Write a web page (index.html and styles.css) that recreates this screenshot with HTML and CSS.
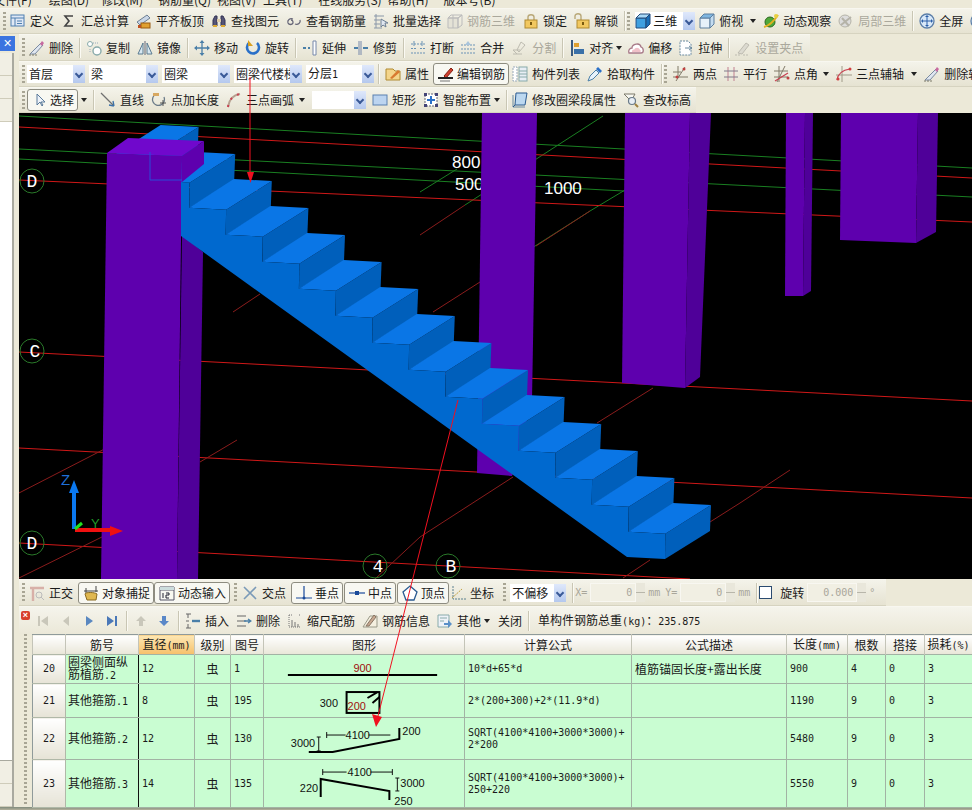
FILE: index.html
```html
<!DOCTYPE html>
<html lang="zh-CN">
<head>
<meta charset="utf-8">
<title>钢筋三维</title>
<link rel="stylesheet" href="styles.css">
</head>
<body>
<svg class="defs" aria-hidden="true">
<symbol id="define" viewBox="0 0 16 16"><rect x="1" y="2" width="13" height="11" fill="#dfe8f5" stroke="#4f7fb0"/><path d="M1 5h13M5 5v8M7 8h5M7 10.500h5" stroke="#4f7fb0" fill="none"/></symbol>
<symbol id="sigma" viewBox="0 0 16 16"><path d="M12 3H4l4 5-4 5h8" fill="none" stroke="#444" stroke-width="1.600"/></symbol>
<symbol id="level" viewBox="0 0 16 16"><path d="M1 9 11 2l3 3L4 12z" fill="#c9d6e6" stroke="#6d7f93"/><rect x="5" y="10" width="9" height="5" fill="#e0a030" stroke="#9a5a10"/><path d="M2 12h3v3H2z" fill="#c05020"/></symbol>
<symbol id="binoc" viewBox="0 0 16 16"><path d="M2 13V7l2-4h2v10zM14 13V7l-2-4h-2v10z" fill="#557" stroke="#335"/><rect x="6" y="6" width="4" height="3" fill="#dca"/><path d="M2 13h4M10 13h4" stroke="#da3" stroke-width="2"/></symbol>
<symbol id="glasses" viewBox="0 0 16 16"><path d="M7 6C4 5 1 7 2 10c1 2 4 2 5 0 0-1 0-3-2-3M9 11c3 1 6-1 5-4" fill="none" stroke="#667" stroke-width="1.300"/></symbol>
<symbol id="batch" viewBox="0 0 16 16"><path d="M1 3h10M1 7h6M1 11h6M1 15h8M3 1v14" stroke="#8a97a8" fill="none"/><path d="M8 6v8l2-2 3 2-1-4h3z" fill="#dfe6f0" stroke="#6d7f93"/></symbol>
<symbol id="cube3" viewBox="0 0 16 16"><path d="M1 5 1 15l10 0 0-10z" fill="#e4e2d6" stroke="#bbb"/><path d="M1 5l3-3h11l-4 3zM11 5l4-3v10l-4 3zM6 2v13" fill="none" stroke="#bbb"/></symbol>
<symbol id="lock" viewBox="0 0 16 16"><path d="M5 7V4c0-3 6-3 6 0v3" fill="none" stroke="#b9a878" stroke-width="1.400"/><rect x="2" y="7" width="12" height="8" fill="#f2c860" stroke="#b08a30"/><rect x="7" y="9" width="2" height="3" fill="#7a5a10"/></symbol>
<symbol id="unlock" viewBox="0 0 16 16"><path d="M1 6V3c0-3 6-3 6 0v4" fill="none" stroke="#b9a878" stroke-width="1.400"/><rect x="3" y="7" width="12" height="8" fill="#f2c860" stroke="#b08a30"/><rect x="8" y="9" width="2" height="3" fill="#7a5a10"/></symbol>
<symbol id="cube" viewBox="0 0 16 16"><path d="M1 5h10v10H1z" fill="#3f9fe0" stroke="#234a7a"/><path d="M1 5l4-4h10l-4 4z" fill="#a8d8f5" stroke="#234a7a"/><path d="M11 5l4-4v10l-4 4z" fill="#1a6fb8" stroke="#234a7a"/></symbol>
<symbol id="cubetop" viewBox="0 0 16 16"><path d="M1 5h10v10H1z" fill="#e6f1fa" stroke="#5d7f9f"/><path d="M1 5l4-4h10l-4 4z" fill="#7fb6e0" stroke="#5d7f9f"/><path d="M11 5l4-4v10l-4 4z" fill="#c4dcf0" stroke="#5d7f9f"/></symbol>
<symbol id="orbit" viewBox="0 0 16 16"><circle cx="7" cy="9" r="5" fill="#4fa83a" stroke="#2c6a20"/><path d="M1 14C5 13 11 8 15 2" stroke="#e0b020" stroke-width="2" fill="none"/><circle cx="13" cy="3" r="2" fill="#e8d040"/></symbol>
<symbol id="part3d" viewBox="0 0 16 16"><circle cx="7" cy="8" r="6" fill="#ddd" stroke="#b5b3a8"/><path d="M3 12 13 4M4 5l7 8" stroke="#b5b3a8" stroke-width="2"/></symbol>
<symbol id="full" viewBox="0 0 16 16"><circle cx="8" cy="8" r="7" fill="#d8e8f8" stroke="#5b7ea8" stroke-width="1.300"/><path d="M8 3v10M3 8h10" stroke="#2b5ea8"/><path d="M8 2 6 4h4zM8 14l-2-2h4zM2 8l2-2v4zM14 8l-2-2v4z" fill="#2b5ea8"/></symbol>
<symbol id="erase" viewBox="0 0 16 16"><path d="M1 14 12 3l2 2-8 9z" fill="#dfe6f0" stroke="#7a8aa0"/><path d="M11 4l2-3 2 2-2 3z" fill="#c86aa0"/><path d="M0 15h9" stroke="#7a7868" stroke-dasharray="2 1"/></symbol>
<symbol id="copy" viewBox="0 0 16 16"><circle cx="4" cy="4" r="2.500" fill="#fff" stroke="#8aa"/><circle cx="11" cy="11" r="4" fill="#fff" stroke="#8aa" stroke-width="1.400"/><path d="M7 3h6M4 9v3" stroke="#9ab" stroke-dasharray="1 1"/></symbol>
<symbol id="mirror" viewBox="0 0 16 16"><path d="M8 1v14" stroke="#667"/><path d="M6 3 1 14h5zM10 3l5 11h-5z" fill="#d8e8f2" stroke="#5a7a90"/></symbol>
<symbol id="move" viewBox="0 0 16 16"><path d="M8 1v14M1 8h14" stroke="#4a7fa8" stroke-width="1.300"/><path d="M8 0 5.500 3h5zM8 16l-2.500-3h5zM0 8l3-2.500v5zM16 8l-3-2.500v5z" fill="#4a7fa8"/></symbol>
<symbol id="rotate" viewBox="0 0 16 16"><path d="M4 3a6 6 0 1 0 8 0" fill="none" stroke="#2a70c8" stroke-width="2.600"/><path d="M3 0v6h5z" fill="#d8a020"/></symbol>
<symbol id="extend" viewBox="0 0 16 16"><path d="M1 8h3M6 8h2" stroke="#4a7fa8" stroke-width="2"/><path d="M11 1h3v14h-3z" fill="#fff" stroke="#78a"/></symbol>
<symbol id="trim" viewBox="0 0 16 16"><path d="M8 1v14M6 1v14" stroke="#78a"/><path d="M1 8h4M10 8h5" stroke="#4a7fa8" stroke-width="2"/></symbol>
<symbol id="break" viewBox="0 0 16 16"><path d="M1 4h14M1 13h14M1 8.500h5M10 8.500h5" stroke="#6a93b5" stroke-dasharray="2 1"/><path d="M4 1v5M12 1v5" stroke="#6a93b5"/></symbol>
<symbol id="merge" viewBox="0 0 16 16"><path d="M1 5h14M1 13h14M1 9h14" stroke="#6a93b5" stroke-dasharray="2 1"/><path d="M8 1 5 5h6z" fill="#a8c4dc"/></symbol>
<symbol id="split" viewBox="0 0 16 16"><path d="M1 10h7M1 14h9M1 10l4 4M9 2l4 3-6 7-2-2z" fill="none" stroke="#bdbbb0"/></symbol>
<symbol id="align" viewBox="0 0 16 16"><path d="M3 0v16" stroke="#3a5a80" stroke-width="2"/><path d="M5 3h5v4H5z" fill="#e0a030"/><path d="M5 9h10v5H5z" fill="#3a70a8"/></symbol>
<symbol id="offset" viewBox="0 0 16 16"><path d="M1 13c-1-3 1-5 3-5 0-4 8-6 9-1 3 1 3 6 0 6z" fill="#fff" stroke="#a87a88" stroke-width="1.300"/><path d="M4 12c0-2 1-3 2-2 1-3 5-3 6 0 1 0 1 2 0 2z" fill="#f0c0c8"/></symbol>
<symbol id="stretch" viewBox="0 0 16 16"><path d="M2 1h8l3 3v11H2z" fill="#fff" stroke="#6a8aa0" stroke-dasharray="2 1"/><path d="M7 8h7M11 6l3 2-3 2" fill="none" stroke="#6a8aa0"/></symbol>
<symbol id="grips" viewBox="0 0 16 16"><path d="M3 13 11 3l3 2-7 9z" fill="#dcdad0" stroke="#bdbbb0"/><path d="M0 15h5M8 15h6" stroke="#bdbbb0" stroke-dasharray="2 1"/></symbol>
<symbol id="prop" viewBox="0 0 16 16"><path d="M1 3h7l2 2h5v9H1z" fill="#f4d58a" stroke="#b08a30"/><path d="M5 12 13 4l2 2-8 7z" fill="#d87a30"/></symbol>
<symbol id="editbar" viewBox="0 0 16 16"><path d="M6 10 13 2l2 2-7 8z" fill="#d04030" stroke="#802010"/><path d="M0 12h15" stroke="#222" stroke-width="2"/><path d="M2 15h10" stroke="#777"/></symbol>
<symbol id="list" viewBox="0 0 16 16"><rect x="1" y="1" width="4" height="14" fill="#fff" stroke="#9ab" stroke-dasharray="2 1"/><rect x="7" y="1" width="8" height="14" fill="#e8eef5" stroke="#8aa"/><path d="M7 5h8M7 8h8M7 11h8" stroke="#8aa"/></symbol>
<symbol id="picker" viewBox="0 0 16 16"><path d="M1 15 3 10l6-6 3 3-6 6z" fill="#e8f2fa" stroke="#4a7fa8"/><path d="M10 2l1-1 4 4-1 1-1 1-4-4z" fill="#2a70c8"/></symbol>
<symbol id="twopt" viewBox="0 0 16 16"><path d="M0 11h15M3 15 12 1M0 6h8M5 0v12" stroke="#807a68"/><circle cx="4" cy="11" r="1.500" fill="#c04040"/><circle cx="11" cy="3" r="1.500" fill="#c04040"/></symbol>
<symbol id="para" viewBox="0 0 16 16"><path d="M5 1v14M11 1v14" stroke="#c08090"/><path d="M1 5h14M1 11h14" stroke="#807a8a"/></symbol>
<symbol id="angle" viewBox="0 0 16 16"><path d="M5 0v16M11 0 3 16M0 5h14M0 11h14" stroke="#807a68"/><path d="M1 15 14 7" stroke="#c84050" stroke-width="1.300"/><circle cx="14" cy="12" r="1.500" fill="#c04040"/></symbol>
<symbol id="threept" viewBox="0 0 16 16"><path d="M6 0v16M0 9h16" stroke="#a09a88"/><path d="M1 14C2 7 7 4 14 3" stroke="#c84050" fill="none" stroke-width="1.200"/><circle cx="2" cy="13" r="1.500" fill="#d04040"/><circle cx="14" cy="3" r="1.500" fill="#d04040"/></symbol>
<symbol id="arrow" viewBox="0 0 16 16"><path d="M5 2v11l3-3 2 4 1-1-2-3h4z" fill="#eef3fa" stroke="#5a7a9a"/></symbol>
<symbol id="line" viewBox="0 0 16 16"><path d="M1 1 13 13" stroke="#707070" stroke-width="1.300"/><path d="M14 14 9 13M14 14 13 9" stroke="#3a70a8" stroke-width="1.300"/></symbol>
<symbol id="ptlen" viewBox="0 0 16 16"><path d="M5 2a6 6 0 1 0 8 3" fill="none" stroke="#6a7a88" stroke-width="1.300"/><path d="M2 1h6v3H2z" fill="#d8a860"/><path d="M9 11h6M12 8v6" stroke="#555"/></symbol>
<symbol id="arc" viewBox="0 0 16 16"><path d="M2 15C3 8 7 3 14 2" fill="none" stroke="#b8a090" stroke-width="2"/><path d="M2 15C3 8 7 3 14 2" fill="none" stroke="#c84050" stroke-dasharray="2 6" stroke-width="2"/></symbol>
<symbol id="rectan" viewBox="0 0 16 16"><rect x="1" y="3" width="14" height="10" fill="#bcd4f0" stroke="#5a80b0"/></symbol>
<symbol id="smart" viewBox="0 0 16 16"><rect x="2" y="2" width="12" height="12" fill="#fff" stroke="#667" stroke-dasharray="2 1"/><path d="M8 4v8M4 8h8" stroke="#2a70c8" stroke-width="2"/><path d="M1 1h3v3H1zM12 1h3v3h-3zM1 12h3v3H1zM12 12h3v3h-3z" fill="#447"/></symbol>
<symbol id="editseg" viewBox="0 0 16 16"><path d="M1 3v12h12" fill="none" stroke="#6a8aa0"/><path d="M4 1h11l-2 12H3z" fill="#bcd8f0" stroke="#2a5a90"/><path d="M3 13 1 15" stroke="#2a5a90"/></symbol>
<symbol id="elev" viewBox="0 0 16 16"><path d="M1 2h11L8 9z" fill="#f8f8f2" stroke="#7a7868"/><circle cx="9" cy="9" r="3.500" fill="#e8eef5" stroke="#6a7a88" stroke-width="1.200"/><path d="M12 12l3 3" stroke="#a08040" stroke-width="2"/></symbol>
<symbol id="ortho" viewBox="0 0 16 16"><path d="M1 3h14M4 3v13" stroke="#d8b0a8" stroke-width="2.400"/><circle cx="10" cy="10" r="3" fill="none" stroke="#bbb"/><path d="M12 12l3 3" stroke="#bbb"/></symbol>
<symbol id="snap" viewBox="0 0 16 16"><path d="M1 6h14" stroke="#444"/><path d="M3 3v6M13 1v6" stroke="#444"/><path d="M2 9c0-2 10-2 12 0l-1 6H4z" fill="#e0b850" stroke="#8a6a20"/></symbol>
<symbol id="dyn" viewBox="0 0 16 16"><path d="M1 2h14v13H1zM1 5h14" fill="none" stroke="#556"/><path d="M1 2h14v3H1z" fill="#cdd"/><path d="M4 8v5M7 8h3v2H7v3h3" fill="none" stroke="#223"/></symbol>
<symbol id="cross" viewBox="0 0 16 16"><path d="M2 2 14 14M14 2 2 14" stroke="#7a9ab8" stroke-width="1.600"/></symbol>
<symbol id="perp" viewBox="0 0 16 16"><path d="M8 1v12M0 13h16" stroke="#1a4a9a" stroke-width="1.200"/><circle cx="8" cy="13" r="1.500" fill="#1a4a9a"/></symbol>
<symbol id="mid" viewBox="0 0 16 16"><path d="M0 8h16" stroke="#1a4a9a" stroke-width="1.200"/><rect x="6" y="6" width="4" height="4" fill="#1a4a9a"/></symbol>
<symbol id="vertex" viewBox="0 0 16 16"><path d="M8 1 15 7l-3 8H4L1 7z" fill="#fff" stroke="#2a5a90" stroke-width="1.300"/></symbol>
<symbol id="coord" viewBox="0 0 16 16"><path d="M3 1v13h13" stroke="#5a8090" stroke-dasharray="2 1" fill="none"/><path d="M2 13 12 4" stroke="#c0a040" stroke-dasharray="2 1"/></symbol>
<symbol id="insert" viewBox="0 0 16 16"><path d="M1 1h5M1 8h3M1 15h5M3 1v4M3 11v4" stroke="#666" fill="none"/><path d="M7 8h8" stroke="#4a7fa8" stroke-width="2.400"/></symbol>
<symbol id="delrow" viewBox="0 0 16 16"><path d="M1 3h9M1 8h9M1 13h9" stroke="#666"/><path d="M8 8h7M12 6l3 2-3 2" fill="none" stroke="#4a7fa8" stroke-width="1.300"/></symbol>
<symbol id="scale" viewBox="0 0 16 16"><path d="M2 2h3M12 2h2M2 2v12h12" stroke="#777" fill="none" stroke-dasharray="1 1"/><path d="M5 14V7M8 14V9M11 14V11" stroke="#777"/></symbol>
<symbol id="info" viewBox="0 0 16 16"><path d="M1 14 8 3h7v11z" fill="#f5f0e0" stroke="#998"/><path d="M4 13 12 2l2 2-7 9z" fill="#c8a890" stroke="#876"/></symbol>
<symbol id="other" viewBox="0 0 16 16"><path d="M1 2h11v12H1z" fill="#eef2f8" stroke="#8aa"/><path d="M3 5h7M3 8h4" stroke="#8aa"/><path d="M7 10h4V7l4 4-4 4v-3H7z" fill="#5a90c8"/></symbol>
<symbol id="first" viewBox="0 0 16 16"><path d="M3 3h2v10H3zM13 3v10L6 8z" fill="#c9c7ba"/></symbol>
<symbol id="prev" viewBox="0 0 16 16"><path d="M11 3v10L5 8z" fill="#c9c7ba"/></symbol>
<symbol id="next" viewBox="0 0 16 16"><path d="M5 3v10l7-5z" fill="#5a88c0"/></symbol>
<symbol id="last" viewBox="0 0 16 16"><path d="M3 3v10l7-5zM11 3h2v10h-2z" fill="#4a78b8"/></symbol>
<symbol id="up" viewBox="0 0 16 16"><path d="M8 3 3 8h3v5h4V8h3z" fill="#c9c7ba"/></symbol>
<symbol id="down" viewBox="0 0 16 16"><path d="M8 13 3 8h3V3h4v5h3z" fill="#5a88c8"/></symbol>
</svg>

<nav class="menu"><div class="menu-in">
<span class="mi mi0">文件(F)</span><span class="mi g17">绘图(D)</span><span class="mi g12">修改(M)</span><span class="mi g15">钢筋量(Q)</span><span class="mi g6">视图(V)</span><span class="mi g7">工具(T)</span><span class="mi g16">在线服务(S)</span><span class="mi g6">帮助(H)</span><span class="mi g15">版本号(B)</span>
</div></nav>

<div class="bar top">
<i class="grip"></i>
<span class="it"><svg class="ic"><use href="#define"/></svg>定义</span>
<span class="it"><svg class="ic"><use href="#sigma"/></svg>汇总计算</span>
<span class="it"><svg class="ic"><use href="#level"/></svg>平齐板顶</span>
<span class="it"><svg class="ic"><use href="#binoc"/></svg>查找图元</span>
<span class="it"><svg class="ic"><use href="#glasses"/></svg>查看钢筋量</span>
<span class="it"><svg class="ic"><use href="#batch"/></svg>批量选择</span>
<span class="it off ml-1"><svg class="ic"><use href="#cube3"/></svg>钢筋三维</span>
<span class="it ml1"><svg class="ic"><use href="#lock"/></svg>锁定</span>
<span class="it"><svg class="ic"><use href="#unlock"/></svg>解锁</span>
<i class="sep"></i><i class="grip tight"></i>
<span class="combo w60"><svg class="ic"><use href="#cube"/></svg><span class="ct">三维</span><b class="cb"></b></span>
<span class="it"><svg class="ic"><use href="#cubetop"/></svg>俯视<i class="dd far2"></i></span>
<span class="it"><svg class="ic"><use href="#orbit"/></svg>动态观察</span>
<span class="it off"><svg class="ic"><use href="#part3d"/></svg>局部三维</span>
<i class="sep"></i>
<span class="it"><svg class="ic"><use href="#full"/></svg>全屏</span>
<span class="it"><svg class="ic"><use href="#full"/></svg></span>
</div>

<div class="main">
<aside class="side">
<div class="side-tab">×</div>
<div class="side-list">
<div class="side-row"></div><div class="side-row"></div><div class="side-row"></div>
<div class="side-white"></div>
<div class="side-row s-foot"></div><div class="side-row s-foot"></div>
</div>
</aside>

<div class="work">
<div class="bar r2">
<i class="grip"></i>
<span class="it"><svg class="ic"><use href="#erase"/></svg>删除</span><i class="sep"></i>
<span class="it"><svg class="ic"><use href="#copy"/></svg>复制</span>
<span class="it"><svg class="ic"><use href="#mirror"/></svg>镜像</span><i class="sep"></i>
<span class="it"><svg class="ic"><use href="#move"/></svg>移动</span>
<span class="it"><svg class="ic"><use href="#rotate"/></svg>旋转</span><i class="sep"></i>
<span class="it"><svg class="ic"><use href="#extend"/></svg>延伸</span>
<span class="it"><svg class="ic"><use href="#trim"/></svg>修剪</span><i class="sep"></i>
<span class="it"><svg class="ic"><use href="#break"/></svg>打断</span>
<span class="it ml-1"><svg class="ic"><use href="#merge"/></svg>合并</span>
<span class="it off ml1"><svg class="ic"><use href="#split"/></svg>分割</span><i class="sep"></i>
<span class="it"><svg class="ic"><use href="#align"/></svg>对齐<i class="dd"></i></span>
<span class="it ml-1"><svg class="ic"><use href="#offset"/></svg>偏移</span>
<span class="it ml-1"><svg class="ic"><use href="#stretch"/></svg>拉伸</span><i class="sep"></i>
<span class="it off"><svg class="ic"><use href="#grips"/></svg>设置夹点</span>
</div>

<div class="bar r3">
<i class="grip"></i>
<span class="row4">
<span class="combo w58"><span class="ct">首层</span><b class="cb"></b></span>
<span class="combo w69"><span class="ct">梁</span><b class="cb"></b></span>
<span class="combo w68"><span class="ct">圈梁</span><b class="cb"></b></span>
<span class="combo w68"><span class="ct cut">圈梁代楼梯</span><b class="cb"></b></span>
<span class="combo w68"><span class="ct">分层<span class="n">1</span></span><b class="cb"></b></span>
</span><i class="sep"></i>
<span class="it"><svg class="ic"><use href="#prop"/></svg>属性</span>
<span class="btn ml-3"><svg class="ic"><use href="#editbar"/></svg>编辑钢筋</span>
<span class="it ml-4"><svg class="ic"><use href="#list"/></svg>构件列表</span>
<span class="it"><svg class="ic"><use href="#picker"/></svg>拾取构件</span>
<i class="sep"></i><i class="grip tight"></i>
<span class="it"><svg class="ic"><use href="#twopt"/></svg>两点</span>
<span class="it ml-1"><svg class="ic"><use href="#para"/></svg>平行</span>
<span class="it"><svg class="ic"><use href="#angle"/></svg>点角<i class="dd far"></i></span>
<span class="it"><svg class="ic"><use href="#threept"/></svg>三点辅轴<i class="dd far2"></i></span>
<span class="it"><svg class="ic"><use href="#erase"/></svg>删除辅轴</span>
</div>

<div class="bar r4">
<i class="grip"></i>
<span class="btn sel"><svg class="ic"><use href="#arrow"/></svg>选择</span><i class="dd sel-dd"></i><i class="sep"></i>
<span class="it"><svg class="ic"><use href="#line"/></svg>直线</span>
<span class="it"><svg class="ic"><use href="#ptlen"/></svg>点加长度</span>
<span class="it"><svg class="ic"><use href="#arc"/></svg>三点画弧<i class="dd far"></i></span>
<span class="combo w54"><span class="ct"></span><b class="cb"></b></span>
<span class="it ml-1"><svg class="ic"><use href="#rectan"/></svg>矩形</span>
<span class="it"><svg class="ic"><use href="#smart"/></svg>智能布置<i class="dd"></i></span><i class="sep"></i>
<span class="it ml-1"><svg class="ic"><use href="#editseg"/></svg>修改圈梁段属性</span>
<span class="it"><svg class="ic"><use href="#elev"/></svg>查改标高</span>
</div>

<svg class="scene" viewBox="19 113 953 466" role="img" aria-label="楼梯三维视图">
<defs>
<g id="step">
<polygon points="665.300,533.700 711,505 710,531 665,559" class="s-side"/>
<polygon points="628.300,531.700 665.300,533.700 711,505 673,503" class="s-top"/>
</g>
</defs>
<rect x="19" y="113" width="953" height="466" fill="#000"/>
<g class="g-lines">
<path d="M19 116 972 168M19 149 972 197M19 159 624 191"/>
<path d="M457 169 420 192M603 116 465 205M590 211 510 262M640 181 590 211"/>
</g>
<g class="r-lines">
<path d="M19 127 972 178M19 180 972 222M19 352 972 401M19 448 972 498M19 543 690 579"/>
</g>
<g class="d-lines">
<path d="M19 493 122 440M19 578 110 533M200 462 237 440M233 312 260 294M420 235 465 205M433 312 480 282M536 246 590 211M420 537 513 477M597 423 653 388M710 522 740 503 790 470M623 578 650 560M375 579 420 537"/>
</g>
<g class="axis-circles">
<circle cx="32" cy="181" r="12"/><circle cx="32" cy="351" r="12"/><circle cx="32" cy="543" r="12"/><circle cx="375" cy="566" r="12"/><circle cx="448" cy="566" r="12"/>
</g>
<g class="axis-t">
<text x="32" y="187">D</text><text x="35" y="357">C</text><text x="32" y="549">D</text><text x="378" y="572">4</text><text x="451" y="572">B</text>
</g>
<g class="dim-t">
<text x="452" y="168">800</text><text x="455" y="190">500</text><text x="544" y="194">1000</text>
</g>
<polygon points="786,113 805,113 803,296 785,296" class="c-front"/><polygon points="805,113 813,113 811,291 803,296" class="c-side"/>
<polygon points="841,113 918,113 916,243 840,240" class="c-front"/><polygon points="918,113 938,113 936,232 916,243" class="c-side"/>
<polygon points="625,113 690,113 685,388 622,383" class="c-front"/><polygon points="690,113 711,113 700,377 685,388" class="c-side"/>
<polygon points="482,113 537,113 532,400 512,476 477,473" class="c-front"/>
<use href="#step" x="-512.400" y="-378"/>
<use href="#step" x="-475.800" y="-351"/>
<polygon points="107,153 182,156 177,579 101,579" class="c-front"/>
<polygon points="182,235 203,252 198,579 177,579" class="c-side"/>
<polygon points="107,153 128,138 204,141 182,156" class="c-top"/>
<polygon points="182,156 204,141 204,164 182,182" class="c-cap"/>
<path d="M150 152V180H182" class="dash"/>
<use href="#step" x="-439.200" y="-324"/>
<use href="#step" x="-402.600" y="-297"/>
<use href="#step" x="-366" y="-270"/>
<use href="#step" x="-329.400" y="-243"/>
<use href="#step" x="-292.800" y="-216"/>
<use href="#step" x="-256.200" y="-189"/>
<use href="#step" x="-219.600" y="-162"/>
<use href="#step" x="-183" y="-135"/>
<use href="#step" x="-146.400" y="-108"/>
<use href="#step" x="-109.800" y="-81"/>
<use href="#step" x="-73.200" y="-54"/>
<use href="#step" x="-36.600" y="-27"/>
<use href="#step"/>
<polygon class="s-front" points="181,182 189.500,182.700 189,207.700 226.100,209.700 225.700,234.700 262.700,236.700 262.300,261.700 299.300,263.700 298.900,288.700 335.900,290.700 335.500,315.700 372.500,317.700 372.100,342.700 409.100,344.700 408.700,369.700 445.700,371.700 445.300,396.700 482.300,398.700 481.900,423.700 518.900,425.700 518.500,450.700 555.500,452.700 555.100,477.700 592.100,479.700 591.700,504.700 628.700,506.700 628.300,531.700 665.300,533.700 665,559 627,557 181,236"/>
<path d="M74 529V490" class="ax-z"/><polygon points="74,480 79,493 69,493" fill="#0a78f0"/>
<path d="M75 530H112" class="ax-x"/><polygon points="123,531 110,526 110,536" fill="#f01010"/>
<path d="M75 529 82 523" class="ax-y"/>
<text x="61" y="485" class="lab-z">Z</text>
<text x="91" y="528" class="lab-y">Y</text>
</svg>

<div class="bar st">
<i class="grip"></i>
<span class="it"><svg class="ic"><use href="#ortho"/></svg>正交</span>
<span class="btn ml-2"><svg class="ic"><use href="#snap"/></svg>对象捕捉</span>
<span class="btn ml-7"><svg class="ic"><use href="#dyn"/></svg>动态输入</span>
<i class="grip ml-3"></i>
<span class="it ml-2"><svg class="ic"><use href="#cross"/></svg>交点</span>
<span class="btn ml-2"><svg class="ic"><use href="#perp"/></svg>垂点</span>
<span class="btn ml-6"><svg class="ic"><use href="#mid"/></svg>中点</span>
<span class="btn ml-6"><svg class="ic"><use href="#vertex"/></svg>顶点</span>
<span class="it ml-6"><svg class="ic"><use href="#coord"/></svg>坐标</span>
<i class="grip ml2"></i>
<span class="combo w56 ml-3"><span class="ct">不偏移</span><b class="cb"></b></span><i class="sep"></i>
<span class="st-lab n">X=</span><span class="num">0</span><span class="spin"></span><span class="st-lab n">mm</span>
<span class="st-lab y-lab n">Y=</span><span class="num">0</span><span class="spin"></span><span class="st-lab n">mm</span><i class="sep"></i>
<span class="check"></span><span class="st-rot">旋转</span>
<span class="num wide">0.000</span><span class="spin"></span><span class="st-lab n">°</span>
</div>

<section class="panel">
<i class="close">×</i>
<div class="bar pbar">
<svg class="ic"><use href="#first"/></svg><svg class="ic"><use href="#prev"/></svg><svg class="ic"><use href="#next"/></svg><svg class="ic"><use href="#last"/></svg><i class="sep"></i>
<svg class="ic"><use href="#up"/></svg><svg class="ic"><use href="#down"/></svg><i class="sep"></i>
<span class="it"><svg class="ic"><use href="#insert"/></svg>插入</span>
<span class="it"><svg class="ic"><use href="#delrow"/></svg>删除</span>
<span class="it"><svg class="ic"><use href="#scale"/></svg>缩尺配筋</span>
<span class="it"><svg class="ic"><use href="#info"/></svg>钢筋信息</span>
<span class="it"><svg class="ic"><use href="#other"/></svg>其他<i class="dd"></i></span>
<span class="it ml1">关闭</span><i class="sep"></i>
<span class="it ml3"><span>单构件钢筋总重<span class="n">(kg)</span>：<span class="n">235.875</span></span></span>
</div>
<div class="tbl-wrap">
<i class="grip tall"></i>
<table>
<colgroup><col class="c1"><col class="c2"><col class="c3"><col class="c4"><col class="c5"><col class="c6"><col class="c7"><col class="c8"><col class="c9"><col class="c10"><col class="c11"><col class="c12"></colgroup>
<thead><tr><th></th><th>筋号</th><th class="hot">直径<span class="n">(mm)</span></th><th>级别</th><th>图号</th><th>图形</th><th>计算公式</th><th>公式描述</th><th>长度<span class="n">(mm)</span></th><th>根数</th><th>搭接</th><th>损耗<span class="n">(%)</span></th></tr></thead>
<tbody>
<tr class="h1"><th class="n">20</th><td class="name">圈梁侧面纵筋植筋<span class="n">.2</span></td><td class="n">12</td><td class="ctr">虫</td><td class="n">1</td>
<td class="fig"><svg class="shape" viewBox="0 0 201 28"><text x="99" y="17" class="red" text-anchor="middle">900</text><path d="M24 20H174" class="thick"/></svg></td>
<td class="n">10*d+65*d</td><td>植筋锚固长度+露出长度</td><td class="n">900</td><td class="n">4</td><td class="n">0</td><td class="n">3</td></tr>
<tr class="h2"><th class="n">21</th><td class="name">其他箍筋<span class="n">.1</span></td><td class="n">8</td><td class="ctr">虫</td><td class="n">195</td>
<td class="fig"><svg class="shape" viewBox="0 0 201 33"><text x="56" y="23" class="blk">300</text><rect x="83" y="8" width="33" height="21" class="thick"/><text x="84" y="26" class="red">200</text><path d="M104 14 114 8M109 19 116 13" class="thick"/></svg></td>
<td class="n">2*(200+300)+2*(11.9*d)</td><td></td><td class="n">1190</td><td class="n">9</td><td class="n">0</td><td class="n">3</td></tr>
<tr class="h3"><th class="n">22</th><td class="name">其他箍筋<span class="n">.2</span></td><td class="n">12</td><td class="ctr">虫</td><td class="n">130</td>
<td class="fig"><svg class="shape" viewBox="0 0 201 41"><text x="27" y="29" class="blk">3000</text><path d="M53 19H57M55 19V33M53 33H57M63 14V20M63 17H82M105 17H127" class="thin"/><text x="82" y="21" class="blk">4100</text><path d="M45 34H69L136 21V10" class="thick"/><text x="139" y="17" class="blk">200</text></svg></td>
<td class="n">SQRT(4100*4100+3000*3000)+<br>2*200</td><td></td><td class="n">5480</td><td class="n">9</td><td class="n">0</td><td class="n">3</td></tr>
<tr class="h4"><th class="n">23</th><td class="name">其他箍筋<span class="n">.3</span></td><td class="n">14</td><td class="ctr">虫</td><td class="n">135</td>
<td class="fig"><svg class="shape" viewBox="0 0 201 47"><path d="M59 9V15M59 12H83M107 12H129M129 9V15M132 18H136M134 18V31M132 31H136" class="thin"/><text x="84" y="16" class="blk">4100</text><path d="M57 37V19L126 31V40" class="thick"/><text x="36" y="32" class="blk">220</text><text x="137" y="27" class="blk">3000</text><text x="131" y="45" class="blk">250</text></svg></td>
<td class="n">SQRT(4100*4100+3000*3000)+<br>250+220</td><td></td><td class="n">5550</td><td class="n">9</td><td class="n">0</td><td class="n">3</td></tr>
</tbody>
</table>
</div>
</section>
</div>
</div>
<div class="foot"></div>

<svg class="leaders" viewBox="0 0 972 810" aria-hidden="true">
<path d="M250 77V176M458 400 378 716"/>
<polygon points="250.500,183 247,172 254,172"/>
<polygon points="376,727 372,714 382,717"/>
</svg>
</body>
</html>
```

FILE: styles.css
```css
* { box-sizing: border-box; }
html, body { margin: 0; padding: 0; }
body {
  position: relative;
  width: 972px;
  height: 810px;
  overflow: hidden;
  background: #ece9d8;
  color: #1a1a1a;
  font: 12px/14px "Noto Sans CJK SC", "Liberation Sans", sans-serif;
}
i { font-style: normal; display: block; flex: none; }
.defs { position: absolute; width: 0; height: 0; }
.n { font-family: "DejaVu Sans Mono", "Liberation Mono", monospace; font-size: 10px; }

.menu { height: 8px; overflow: hidden; }
.menu-in { display: flex; margin-top: -8px; height: 16px; line-height: 16px; white-space: nowrap; }
.mi0 { margin-left: -7px; }
.g6 { margin-left: 6px; }
.g7 { margin-left: 7px; }
.g12 { margin-left: 12px; }
.g15 { margin-left: 15px; }
.g16 { margin-left: 16px; }
.g17 { margin-left: 17px; }

.ml-7 { margin-left: -7px; }
.ml-6 { margin-left: -6px; }
.ml-4 { margin-left: -4px; }
.ml-3 { margin-left: -3px; }
.ml-2 { margin-left: -2px; }
.ml-1 { margin-left: -1px; }
.ml1 { margin-left: 1px; }
.ml2 { margin-left: 2px; }
.ml3 { margin-left: 3px; }

.bar {
  display: flex;
  align-items: center;
  gap: 7px;
  padding-left: 3px;
  overflow: hidden;
  white-space: nowrap;
  background: linear-gradient(#f4f3ea, #e6e3d2);
  border-top: 1px solid #f8f7f0;
  border-bottom: 1px solid #d6d3c0;
}
.bar > .grip:first-child { margin-right: -3px; }
.top { height: 26px; }
.r2 { height: 27px; width: 791px; }
.r3 { height: 26px; }
.r4 { height: 26px; width: 677px; }
.st { height: 27px; width: 867px; }

.it { display: flex; align-items: center; gap: 4px; flex: none; height: 22px; }
.it.off { color: #aaa89c; }
.ic { width: 16px; height: 16px; flex: none; display: block; }

.grip {
  width: 3px;
  height: 19px;
  background: repeating-linear-gradient(#a8a594 0 2px, transparent 2px 4px);
}
.grip.tight { margin-left: -4px; margin-right: -1px; }
.grip.tall { position: absolute; left: 5px; top: 0; height: 172px; }
.sep { width: 1px; height: 20px; background: #c9c6b4; margin: 0 -1px; box-shadow: 1px 0 #fbfaf3; }
.dd {
  width: 0; height: 0;
  margin-left: -1px;
  border: 3px solid transparent;
  border-top: 4px solid #222;
  border-bottom: 0;
}
.dd.far { margin-left: 1px; }
.dd.far2 { margin-left: 3px; }
.sel-dd { margin-left: -4px; }

.combo { display: flex; align-items: center; flex: none; height: 18px; background: #fff; }
.w54 { width: 54px; }
.w56 { width: 56px; }
.w58 { width: 58px; }
.w60 { width: 60px; margin-left: -1px; margin-right: -3px; }
.w68 { width: 68px; }
.w69 { width: 69px; }
.ct { flex: 1; min-width: 0; padding-left: 2px; overflow: hidden; white-space: nowrap; }
.cb {
  width: 12px; height: 18px; flex: none; position: relative;
  background: linear-gradient(#dfe8fb, #b4c8ee);
}
.cb::after {
  content: "";
  position: absolute; left: 3px; top: 6px;
  width: 4px; height: 4px;
  border: solid #3a5a98; border-width: 0 2px 2px 0;
  transform: rotate(45deg);
}
.row4 { display: flex; gap: 4px; flex: none; margin-left: -2px; margin-right: -2px; }

.btn {
  display: flex; align-items: center; gap: 3px; flex: none;
  height: 22px; padding: 0 3px 0 4px;
  background: #f8f8f2;
  border: 1px solid #8d8c80;
  border-radius: 3px;
}
.sel { width: 51px; padding-left: 4px; gap: 2px; margin-left: -2px; }

.scene { display: block; width: 953px; height: 466px; flex: none; }
.g-lines path { stroke: #1a7f22; stroke-width: 1; fill: none; }
.r-lines path { stroke: #d01818; stroke-width: 1; fill: none; }
.d-lines path { stroke: #8a1c1c; stroke-width: 1; fill: none; }
.axis-circles circle { fill: none; stroke: #2a7a2a; stroke-width: 1; }
.axis-t text { fill: #fff; font: 18px "Liberation Mono", monospace; text-anchor: middle; }
.dim-t text { fill: #fff; font: 17px "Liberation Sans", sans-serif; }
.s-top { fill: #0a76e6; }
.s-side { fill: #005fbb; }
.s-front { fill: #0069cf; }
.c-front { fill: #5e00ae; }
.c-side { fill: #4f0099; }
.c-top { fill: #7008cc; }
.c-cap { fill: #5e00ae; }
.dash { fill: none; stroke: #2a4ad8; stroke-width: 1; }
.ax-z { stroke: #0a78f0; stroke-width: 4; fill: none; }
.ax-x { stroke: #f01010; stroke-width: 4; fill: none; }
.ax-y { stroke: #20e020; stroke-width: 3; fill: none; }
.lab-z { fill: #1f6fd8; font: 15px "Liberation Sans", sans-serif; }
.lab-y { fill: #1f9a28; font: 13px "Liberation Sans", sans-serif; }

.st-lab { color: #a8a69a; flex: none; margin-left: -4px; }
.st-lab.y-lab { margin-left: -2px; }
.num {
  width: 46px; height: 19px; flex: none; margin-left: -4px; padding-right: 3px;
  text-align: right; color: #a8a69a;
  font: 10px/18px "DejaVu Sans Mono", monospace;
  background: #f1efe3; border: 1px solid #f8f7f1;
}
.num.wide { width: 50px; }
.spin {
  width: 9px; height: 19px; flex: none; margin-left: -7px;
  background: linear-gradient(#e9e7db 0 48%, #b8b6aa 48% 52%, #e9e7db 52%);
}
.check { width: 13px; height: 13px; flex: none; background: #fff; border: 1px solid #2a4a70; margin-left: -4px; }
.st-rot { flex: none; margin-left: 1px; }

.main { display: flex; height: 773px; }
.side { width: 19px; flex: none; padding-top: 2px; }
.side-tab {
  width: 15px; height: 15px;
  background: #3b74e0;
  color: #fff;
  font: 14px/14px "Liberation Sans", sans-serif;
  text-align: center;
}
.side-list {
  width: 14px; height: 754px; margin-top: 2px;
  display: flex; flex-direction: column;
  border-right: 2px solid #a9a99f;
}
.side-row { height: 23px; background: #f1efe4; border-bottom: 1px solid #cfccba; flex: none; }
.side-white { flex: 1; background: #fff; border-bottom: 1px solid #a9a99f; }
.work { width: 953px; flex: none; }

.panel { position: relative; height: 201px; border-top: 1px solid #f8f7f0; }
.close {
  position: absolute; left: 2px; top: 4px; z-index: 1;
  width: 9px; height: 9px; border-radius: 2px;
  background: #d8402c; color: #fff;
  font: bold 9px/9px "Liberation Sans", sans-serif; text-align: center;
}
.pbar {
  height: 27px; gap: 7px; padding-left: 16px;
  background: linear-gradient(#f5f4ec, #ebe8d8); border: 0;
}
.tbl-wrap { position: relative; padding-left: 13px; }
table { border-collapse: collapse; table-layout: fixed; width: 940px; }
.c1 { width: 33px; } .c2 { width: 73px; } .c3 { width: 56px; } .c4 { width: 36px; }
.c5 { width: 33px; } .c6 { width: 201px; } .c7 { width: 167px; } .c8 { width: 155px; }
.c9 { width: 61px; } .c10 { width: 38px; } .c11 { width: 39px; } .c12 { width: 48px; }
thead th {
  height: 20px; padding: 0; font-weight: normal;
  background: linear-gradient(#fff, #e9e6d8);
  border: 1px solid #c4c4b8;
  border-top: 1px solid #8f9a9a;
  border-bottom: 0;
}
thead th.hot { background: linear-gradient(#fde7b4, #f6c06a); }
tbody th {
  padding: 0; font-weight: normal;
  background: linear-gradient(#fff, #e6e3d6);
  border: 1px solid #b0b8a8;
  border-left-color: #8f9a9a;
}
tbody td {
  padding: 0 0 0 3px;
  background: #c9fdd2;
  border: 1px solid #a2b3a4;
  line-height: 12px;
  overflow: hidden;
}
tbody td.n { font-size: 10px; }
td.name { border-right: 1px solid #111; padding-left: 2px; line-height: 12px; }
td.ctr { text-align: center; padding: 0; }
td.fig { padding: 0; }
.h1 { height: 29px; }
.h2 { height: 34px; }
.h3 { height: 42px; }
.h4 { height: 48px; }
.shape { display: block; width: 200px; }
.h1 .shape { height: 28px; }
.h2 .shape { height: 33px; }
.h3 .shape { height: 41px; }
.h4 .shape { height: 47px; }
.thick { fill: none; stroke: #000; stroke-width: 2; }
.thin { fill: none; stroke: #111; stroke-width: 1; }
.red { fill: #a01010; font: 11px "Liberation Sans", sans-serif; }
.blk { fill: #111; font: 11px "Liberation Sans", sans-serif; }

.foot { height: 3px; background: linear-gradient(#7f8a7c, #b5b29c); }

.leaders { position: absolute; left: 0; top: 0; width: 972px; height: 810px; pointer-events: none; }
.leaders path { stroke: #f01020; stroke-width: 1; fill: none; }
.leaders polygon { fill: #f01020; }
```
